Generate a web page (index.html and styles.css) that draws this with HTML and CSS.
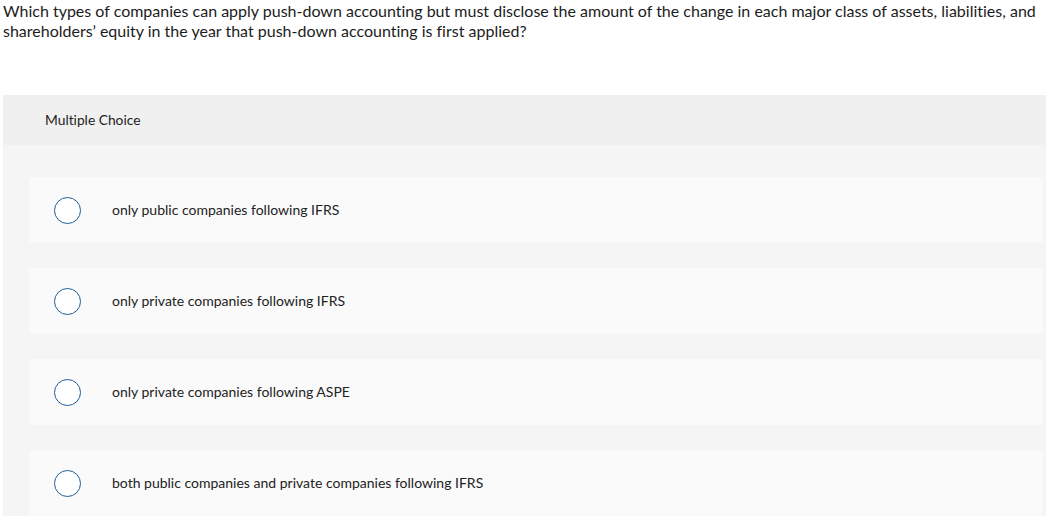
FILE: index.html
```html
<!DOCTYPE html>
<html>
<head>
<meta charset="utf-8">
<link rel="stylesheet" href="styles.css">
</head>
<body>
<div class="page">
  <p class="question">Which types of companies can apply push-down accounting but must disclose the amount of the change in each major class of assets, liabilities, and shareholders’ equity in the year that push-down accounting is first applied?</p>
  <div class="panel">
    <div class="panel-head">Multiple Choice</div>
    <div class="options">
      <div class="option"><span class="radio"></span><span class="label">only public companies following IFRS</span></div>
      <div class="option"><span class="radio"></span><span class="label">only private companies following IFRS</span></div>
      <div class="option"><span class="radio"></span><span class="label">only private companies following ASPE</span></div>
      <div class="option"><span class="radio"></span><span class="label">both public companies and private companies following IFRS</span></div>
    </div>
  </div>
</div>
</body>
</html>
```
FILE: styles.css
```css
html, body {
  margin: 0;
  padding: 0;
  background: #ffffff;
}
body {
  font-family: "Lato", "Liberation Sans", sans-serif;
  font-variant-ligatures: none;
  color: #1a1a1a;
  overflow: hidden;
}
.page {
  padding: 0 0 0 3px;
}
.question {
  margin: 0;
  padding-top: 1px;
  font-size: 16px;
  line-height: 20px;
  color: #1c1c1c;
  height: 94px;
}
.panel {
  background: #f5f5f5;
}
.panel-head {
  background: #f0f0f0;
  height: 48px;
  padding-bottom: 2px;
  display: flex;
  align-items: center;
  padding-left: 42px;
  font-size: 13.8px;
  color: #222;
}
.options {
  display: flex;
  flex-direction: column;
  gap: 25px;
  padding: 32px 3px 0 26px;
}
.option {
  background: #fafafa;
  border-radius: 3px;
  height: 66px;
  display: flex;
  align-items: center;
  padding-left: 25px;
}
.radio {
  width: 25px;
  height: 25px;
  border: 1.5px solid #1f5c99;
  border-radius: 50%;
  background: #fff;
  flex: none;
}
.label {
  margin-left: 31px;
  margin-bottom: 2px;
  font-size: 14px;
  color: #222;
}
```
